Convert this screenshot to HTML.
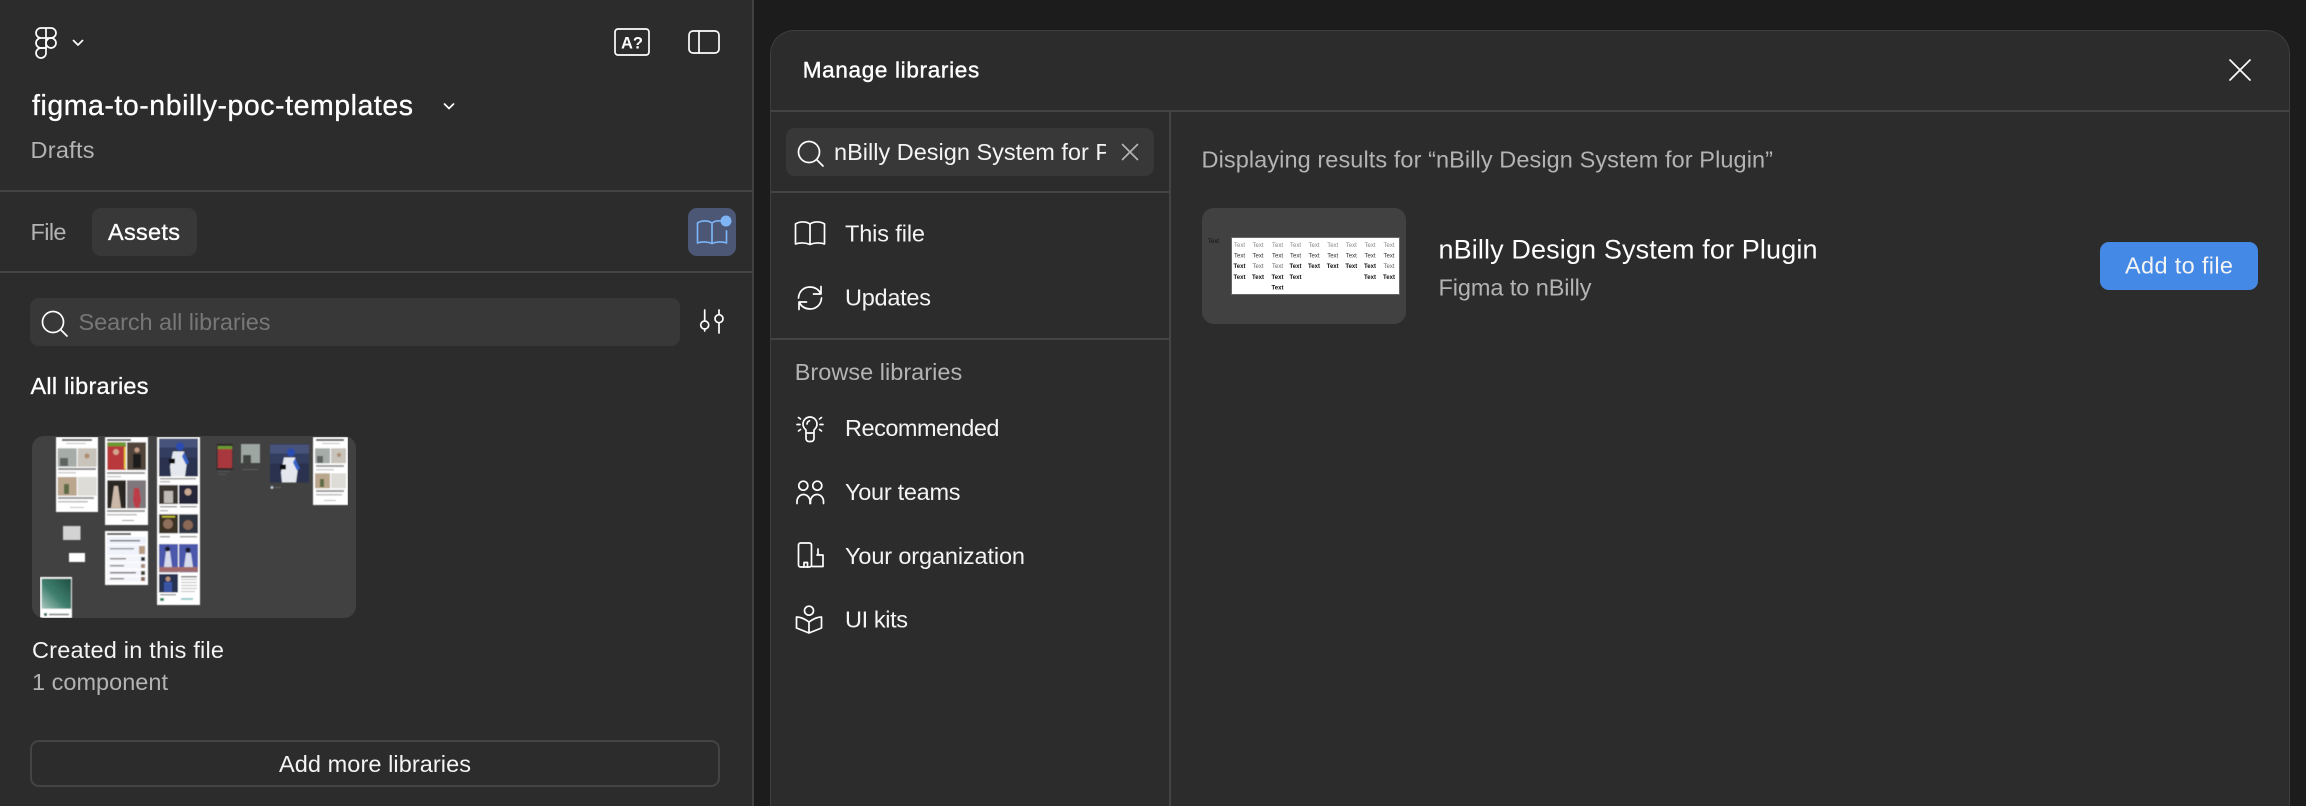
<!DOCTYPE html>
<html lang="en"><head><meta charset="utf-8"><title>Manage libraries</title>
<style>
html,body{margin:0;padding:0;width:2306px;height:806px;overflow:hidden;background:#1c1c1c}
body{position:relative;font-family:"Liberation Sans",sans-serif}
.a{position:absolute;box-sizing:border-box}
svg{position:absolute;left:0;top:0}
text{font-family:"Liberation Sans",sans-serif}
.t{fill:#f4f4f4;font-size:23.500px}
.m{fill:#fff;stroke:#fff;stroke-width:.3px;font-size:23.500px}
.s{fill:#b3b3b3;font-size:23.500px}
.ic{fill:none;stroke:#fff;stroke-width:1.700;stroke-linecap:round;stroke-linejoin:round}
</style></head><body>
<div class="a" style="left:0;top:0;width:754px;height:806px;background:#2c2c2c;border-right:2px solid #414141"></div>
<div class="a" style="left:0;top:190px;width:752px;height:2px;background:#444"></div>
<div class="a" style="left:0;top:271px;width:752px;height:2px;background:#444"></div>
<div class="a" style="left:92px;top:208px;width:105px;height:48px;border-radius:9px;background:#383838"></div>
<div class="a" style="left:688px;top:208px;width:48px;height:48px;border-radius:9px;background:#4c5675"></div>
<div class="a" style="left:30px;top:298px;width:650px;height:48px;border-radius:9px;background:#383838"></div>
<div class="a" style="left:30px;top:740px;width:690px;height:47px;border-radius:9px;border:2px solid #444"></div>
<div class="a" style="left:770px;top:30px;width:1520px;height:776px;border-radius:24px 24px 0 0;background:#2c2c2c;border:1.500px solid #3e3e3e;border-bottom:0"></div>
<div class="a" style="left:771px;top:110px;width:1518px;height:2px;background:#444"></div>
<div class="a" style="left:1169px;top:112px;width:2px;height:694px;background:#444"></div>
<div class="a" style="left:771px;top:191px;width:398px;height:2px;background:#444"></div>
<div class="a" style="left:771px;top:338px;width:398px;height:2px;background:#444"></div>
<div class="a" style="left:786px;top:128px;width:368px;height:48px;border-radius:9px;background:#383838"></div>
<div class="a" style="left:1202px;top:208px;width:204px;height:116px;border-radius:12px;background:#414141"></div>
<div class="a" style="left:1231px;top:237px;width:169px;height:58px;background:#fff;border:1px solid #666"></div>
<div class="a" style="left:2100px;top:242px;width:158px;height:48px;border-radius:9px;background:#4589e6"></div>
<div class="a" style="left:32px;top:436px;width:324px;height:182px;border-radius:12px;background:#414141"></div>

<svg width="2306" height="806" viewBox="0 0 2306 806" xmlns="http://www.w3.org/2000/svg">
<defs>
<clipPath id="th"><rect x="32" y="436" width="324" height="182" rx="12"/></clipPath>
<clipPath id="q"><rect x="830" y="130" width="276" height="44"/></clipPath>
<linearGradient id="gr" x1="1" y1="0" x2="0" y2="1"><stop offset="0" stop-color="#1f4f42"/><stop offset=".55" stop-color="#3f7f6e"/><stop offset="1" stop-color="#a9c8bf"/></linearGradient>
<filter id="bl" x="0" y="0" width="100%" height="100%"><feGaussianBlur stdDeviation=".6"/></filter>
<g id="book"><path class="ic" d="M795.500 244V224c3.500-2.500 10.500-3 14.500 0V243M810 224c4-3 11-2.500 14.500 0V244M795.500 244c4-1.500 10-1.500 14.500.5c4.500-2 10.500-2 14.500-.5"/></g>
<g id="search"><circle class="ic" cx="809" cy="152" r="10.500"/><path class="ic" d="M817 160L823 166"/></g>
<g id="player"><rect width="39" height="38" fill="#2a3350"/><rect y="0" width="39" height="9" fill="#46527a"/><rect y="9" width="39" height="10" fill="#323c5e"/><path d="M14 13h11l3 10-2 15H12l-1-10z" fill="#e4e8ee"/><circle cx="21" cy="8" r="4" fill="#2c4cb0"/><path d="M25 14l5 10-3 2-4-8z" fill="#3763c9"/><rect x="10" y="20" width="6" height="5" fill="#111"/></g>
</defs>

<!-- Thumbnail: created in this file -->
<g clip-path="url(#th)"><g filter="url(#bl)">
<rect x="56" y="437" width="42" height="75" fill="#fff"/>
<rect x="105" y="437" width="43" height="88" fill="#fff"/>
<rect x="105" y="531" width="43" height="54" fill="#fff"/>
<rect x="157" y="437" width="43" height="168" fill="#fff"/>
<rect x="313" y="437" width="35" height="68" fill="#fff"/>
<rect x="63" y="526" width="17.500" height="14" fill="#d3d3d3"/>
<rect x="69" y="553" width="16" height="9" fill="#fff"/>
<rect x="40" y="577" width="32" height="41" fill="#fff"/>
<rect x="41.700" y="578.700" width="29.500" height="30" fill="url(#gr)"/>
<rect x="44" y="613" width="3" height="3" fill="#2d6b57"/><rect x="49" y="613.500" width="20" height="2" fill="#999"/>
<rect x="62" y="439" width="30" height="2" fill="#555"/>
<rect x="66" y="443" width="20" height="1" fill="#bbb"/>
<rect x="57.700" y="448.300" width="19" height="18.500" fill="#a6aca7"/><rect x="60" y="458" width="8" height="8" fill="#5e6462"/>
<rect x="77.700" y="448.300" width="19" height="18.500" fill="#c8c3bb"/><circle cx="87" cy="456" r="2.500" fill="#b18d6f"/>
<rect x="58" y="468" width="38" height="2" fill="#888"/><rect x="58" y="472" width="18" height="1.500" fill="#ccc"/>
<rect x="57.700" y="477" width="19" height="18.700" fill="#b9a68c"/><rect x="64" y="484" width="5" height="10" fill="#5c6b45"/>
<rect x="77.700" y="477" width="19" height="18.700" fill="#dedcd6"/>
<rect x="58" y="497" width="36" height="2" fill="#999"/><rect x="58" y="501" width="30" height="1.500" fill="#bbb"/><rect x="70" y="507" width="14" height="1" fill="#bbb"/>
<rect x="107" y="439" width="24" height="2" fill="#555"/>
<rect x="107.300" y="442.300" width="18.700" height="27.700" fill="#b9383a"/><rect x="107.300" y="442.300" width="18.700" height="4" fill="#6b9a30"/><rect x="124" y="447" width="2" height="22" fill="#e4c43a"/><circle cx="116" cy="452" r="3" fill="#d3a78f"/>
<rect x="127" y="442.300" width="19" height="27.700" fill="#51443b"/><rect x="133" y="454" width="8" height="14" fill="#1e1e1e"/><circle cx="137" cy="450" r="2.500" fill="#c49a84"/>
<rect x="107" y="472" width="38" height="2" fill="#999"/><rect x="107" y="476" width="14" height="1.500" fill="#ccc"/>
<rect x="107.300" y="480.300" width="18.700" height="28" fill="#2a2523"/><path d="M114 486h4l3 22h-10z" fill="#cbb8a8"/>
<rect x="127" y="480.300" width="19" height="28" fill="#7e777b"/><path d="M134 488h5l2 12-2 8h-4l-2-8z" fill="#bb3c47"/>
<rect x="107" y="510" width="38" height="2" fill="#999"/><rect x="107" y="514" width="30" height="1.500" fill="#bbb"/><rect x="122" y="520" width="12" height="1" fill="#999"/>
<rect x="107" y="533" width="24" height="2" fill="#555"/>
<rect x="107" y="537" width="39" height="7" fill="#eef2fb"/><rect x="110" y="540" width="30" height="1.500" fill="#777"/>
<rect x="107" y="545" width="39" height="10" fill="#f0f3fb"/><rect x="110" y="548" width="24" height="1.500" fill="#999"/><rect x="139" y="546" width="6" height="8" fill="#b79c84"/>
<rect x="107" y="556" width="39" height="6" fill="#f4f5fa"/><rect x="110" y="558" width="16" height="1.500" fill="#888"/><rect x="141" y="557" width="4" height="4" fill="#333"/>
<rect x="107" y="563" width="39" height="5.500" fill="#f4f5fa"/><rect x="110" y="565" width="14" height="1.500" fill="#888"/><rect x="141" y="564" width="4" height="4" fill="#a98d78"/>
<rect x="107" y="570" width="39" height="5.500" fill="#f4f5fa"/><rect x="110" y="572" width="26" height="1.500" fill="#777"/><rect x="141" y="571" width="4" height="4" fill="#443"/>
<rect x="107" y="576.500" width="39" height="5" fill="#f4f5fa"/><rect x="110" y="578" width="14" height="1.500" fill="#888"/><rect x="141" y="577" width="4" height="4" fill="#865"/>
<use href="#player" transform="translate(159 438.500)"/>
<rect x="160" y="478" width="36" height="1.500" fill="#999"/><rect x="160" y="481" width="10" height="1.500" fill="#bbb"/>
<rect x="159" y="485" width="19" height="19" fill="#3b3432"/><rect x="164" y="491" width="9" height="12" fill="#bdb9b5"/>
<rect x="179" y="485" width="19" height="19" fill="#26283a"/><circle cx="188" cy="492" r="3.500" fill="#c9a793"/>
<rect x="160" y="506" width="17" height="1.500" fill="#999"/><rect x="180" y="506" width="17" height="1.500" fill="#999"/><rect x="160" y="510" width="8" height="1.500" fill="#bbb"/>
<rect x="159" y="514.300" width="19" height="19" fill="#3a3128"/><circle cx="168" cy="524" r="5" fill="#8d6f5a"/><rect x="162" y="516" width="13" height="1.500" fill="#c7c32e"/>
<rect x="179" y="514.300" width="19" height="19" fill="#2e3540"/><circle cx="188" cy="525" r="5" fill="#8a6855"/>
<rect x="160" y="536" width="10" height="1.500" fill="#999"/><rect x="180" y="536" width="17" height="1.500" fill="#999"/>
<rect x="159" y="544" width="19" height="28.300" fill="#4b58ab"/><path d="M166 551h4l2 16h-8z" fill="#d6daec"/><circle cx="167.500" cy="549" r="2.500" fill="#1f1d28"/>
<rect x="179" y="544" width="19" height="28.300" fill="#4b58ab"/><path d="M186 553h5l2 14h-9z" fill="#d6daec"/><circle cx="188" cy="550" r="2.500" fill="#1f1d28"/>
<rect x="159" y="567" width="39" height="5" fill="#a06a6a"/>
<rect x="159" y="574" width="19" height="18.500" fill="#28304f"/><rect x="164" y="582" width="8" height="10" fill="#3a55a6"/><circle cx="168" cy="579" r="2.500" fill="#b89078"/>
<rect x="160" y="594" width="16" height="1.500" fill="#999"/><rect x="160" y="598" width="4" height="3" fill="#2d8a5d"/>
<rect x="181" y="576" width="16" height="1.500" fill="#777"/><rect x="181" y="579" width="16" height="1" fill="#bbb"/><rect x="181" y="582" width="16" height="1" fill="#bbb"/><rect x="181" y="585" width="16" height="1" fill="#bbb"/><rect x="181" y="588" width="16" height="1" fill="#bbb"/><rect x="181" y="591" width="14" height="1" fill="#bbb"/><rect x="181" y="598" width="12" height="2" fill="#9cc"/>
<rect x="216.700" y="444" width="16" height="26" fill="#2f2c2b"/><rect x="217.700" y="446" width="14.500" height="22" fill="#a8383c"/><rect x="217.700" y="446" width="14.500" height="3" fill="#6b9a30"/><rect x="218" y="471" width="12" height="1" fill="#555"/><rect x="218" y="474" width="8" height="1" fill="#555"/>
<rect x="241" y="444" width="19" height="19" fill="#9ea6a2"/><rect x="243" y="455" width="8" height="8" fill="#3f4543"/><rect x="242" y="469" width="16" height="1" fill="#5c5c5c"/>
<rect x="270" y="444" width="39" height="38.500" fill="#2a3350"/><use href="#player" transform="translate(270 444.500)"/><circle cx="272" cy="487.500" r="1.500" fill="#bcd"/><rect x="275" y="487" width="6" height="1" fill="#666"/>
<rect x="316" y="439" width="28" height="2" fill="#555"/><rect x="322" y="443" width="18" height="1" fill="#bbb"/>
<rect x="315" y="448.300" width="15" height="15" fill="#a6aca7"/><rect x="317" y="456" width="6" height="7" fill="#5e6462"/>
<rect x="331" y="448.300" width="15" height="15" fill="#c8c3bb"/><circle cx="339" cy="455" r="2" fill="#b18d6f"/>
<rect x="316" y="465" width="28" height="2" fill="#999"/><rect x="316" y="469" width="18" height="1.500" fill="#ccc"/>
<rect x="315" y="473.300" width="15" height="15" fill="#b9a68c"/><rect x="320" y="479" width="4" height="8" fill="#5c6b45"/>
<rect x="331" y="473.300" width="15" height="15" fill="#dedcd6"/>
<rect x="316" y="490" width="28" height="2" fill="#999"/><rect x="316" y="494" width="26" height="1.500" fill="#bbb"/><rect x="324" y="500" width="12" height="1" fill="#bbb"/>
</g></g>

<!-- Library thumbnail text -->
<g text-anchor="middle" font-size="6">
<text x="1213.500" y="243" fill="#111">Text</text>
<g fill="#888"><text x="1239.500" y="247">Text</text><text x="1258" y="247">Text</text><text x="1277.500" y="247">Text</text><text x="1295.500" y="247">Text</text><text x="1314" y="247">Text</text><text x="1332.700" y="247">Text</text><text x="1351.300" y="247">Text</text><text x="1370" y="247">Text</text><text x="1389" y="247">Text</text></g>
<g fill="#333"><text x="1239.500" y="257.500">Text</text><text x="1258" y="257.500">Text</text><text x="1277.500" y="257.500">Text</text><text x="1295.500" y="257.500">Text</text><text x="1314" y="257.500">Text</text><text x="1332.700" y="257.500">Text</text><text x="1351.300" y="257.500">Text</text><text x="1370" y="257.500">Text</text><text x="1389" y="257.500">Text</text></g>
<g fill="#111" font-weight="bold"><text x="1239.500" y="268">Text</text><text x="1314" y="268">Text</text><text x="1332.700" y="268">Text</text><text x="1351.300" y="268">Text</text><text x="1370" y="268">Text</text><text x="1295.500" y="268">Text</text>
<text x="1239.500" y="279">Text</text><text x="1258" y="279">Text</text><text x="1277.500" y="279">Text</text><text x="1295.500" y="279">Text</text><text x="1370" y="279">Text</text><text x="1389" y="279">Text</text><text x="1277.500" y="289.500">Text</text></g>
<g fill="#666"><text x="1258" y="268">Text</text><text x="1277.500" y="268">Text</text><text x="1389" y="268">Text</text></g>
</g>

<!-- Left panel text -->
<text class="m" style="font-size:28.500px" x="32" y="115" textLength="381">figma-to-nbilly-poc-templates</text>
<text class="s" x="30.500" y="158" textLength="64">Drafts</text>
<text class="s" x="30.500" y="240" textLength="36">File</text>
<text class="m" x="108" y="240" textLength="72">Assets</text>
<text x="78.500" y="330" style="font-size:23.500px" fill="#777" textLength="192">Search all libraries</text>
<text class="m" x="30.500" y="394" textLength="118">All libraries</text>
<text class="t" x="32" y="658" textLength="192">Created in this file</text>
<text class="s" x="32" y="690" textLength="136">1 component</text>
<text class="t" x="279" y="772" textLength="192">Add more libraries</text>

<!-- Left panel icons -->
<path class="ic" d="M46 28H41a5 5 0 0 0 0 10h5zM46 28h5a5 5 0 0 1 0 10h-5zM46 38h-5a5 5 0 0 0 0 10h5z"/><circle class="ic" cx="51" cy="43" r="5"/><path class="ic" d="M41 48h5v4.500a5 5 0 1 1-5-4.500z"/>
<path class="ic" d="M73.500 40.500L78 45L82.500 40.500M444.500 104L449 108.500L453.500 104"/>
<rect class="ic" x="615" y="29" width="34" height="26" rx="3"/>
<text x="632" y="48.500" text-anchor="middle" font-weight="bold" fill="#fff" style="font-size:16.500px">A?</text>
<rect class="ic" x="689" y="31" width="30" height="22" rx="4"/><path class="ic" d="M699 31V53"/>
<g transform="translate(-98 -1)"><path fill="none" stroke="#7cb4f5" stroke-width="1.700" stroke-linecap="round" stroke-linejoin="round" d="M795.500 244V224c3.500-2.500 10.500-3 14.500 0V243M810 224c4-3 9-2.500 12-1M824.500 232V244M795.500 244c4-1.500 10-1.500 14.500.5c4.500-2 10.500-2 14.500-.5"/></g>
<circle cx="726" cy="221" r="5.500" fill="#7fb5f5"/>
<use href="#search" transform="translate(-756 170)"/>
<path class="ic" d="M704.700 310V320.500M704.700 329V331M719 310V314.500M719 323V333"/>
<circle class="ic" cx="704.700" cy="325" r="4"/><circle class="ic" cx="719" cy="318.700" r="4"/>

<!-- Modal text -->
<text class="m" style="stroke-width:.4px;font-size:22.500px" x="802.700" y="77.700" textLength="176.500">Manage libraries</text>
<g clip-path="url(#q)"><text class="t" x="834" y="160" textLength="277">nBilly Design System for P</text></g>
<text class="t" x="845" y="241.700" textLength="80">This file</text>
<text class="t" x="845" y="305.700" textLength="86">Updates</text>
<text class="s" x="794.700" y="380" textLength="167.500">Browse libraries</text>
<text class="t" x="845" y="436" textLength="154.500">Recommended</text>
<text class="t" x="845" y="500" textLength="115.500">Your teams</text>
<text class="t" x="845" y="564" textLength="180">Your organization</text>
<text class="t" x="845" y="627.700" textLength="63">UI kits</text>
<text class="s" x="1201.500" y="167.700" textLength="571.500">Displaying results for “nBilly Design System for Plugin”</text>
<text x="1438.500" y="258.500" fill="#fff" style="font-size:27px" textLength="379">nBilly Design System for Plugin</text>
<text class="s" x="1438.500" y="295.700" textLength="153">Figma to nBilly</text>
<text class="t" x="2125" y="273.300" fill="#fff" textLength="108">Add to file</text>

<!-- Modal icons -->
<path class="ic" d="M2230 60L2250 80M2250 60L2230 80"/>
<use href="#search"/>
<path fill="none" stroke="#b3b3b3" stroke-width="1.700" stroke-linecap="round" d="M1122.500 144.500L1137.500 159.500M1137.500 144.500L1122.500 159.500"/>
<use href="#book"/>
<path class="ic" d="M798.500 298C799 291 804 287 810 287C814 287 818 289 820.500 293M821 286.500V294H813.500M821.500 298C821 305 816 309 810 309C806 309 802 307 799.500 303M799 309.500V302H806.500"/>
<path class="ic" d="M806 433V430c-1.700-1.500-3-3.500-3-6a7 7 0 0 1 14 0c0 2.500-1.300 4.500-3 6V433zM806 433h8v5.500a3 3 0 0 1-3 3h-2a3 3 0 0 1-3-3zM807 424c.2-1.500 1-2.700 2.500-3.200M798.500 417.500L800.500 419M797 424.500H800M798.500 431L800.500 429.500M821.500 417.500L819.500 419M823 424.500H820M821.500 431L819.500 429.500"/>
<circle class="ic" cx="803.300" cy="485.700" r="4.500"/><circle class="ic" cx="817.300" cy="485.700" r="4.500"/>
<path class="ic" d="M797 503.500v-2c0-4 3-7 6.500-7s6.500 3 6.500 7v2M823.500 503.500v-2c0-4-3-7-6.500-7s-6.500 3-6.500 7v2"/>
<rect class="ic" x="798.500" y="543" width="13" height="24" rx="2"/><path class="ic" d="M804 567V562.500H807.500V567M812 566.500H823V555H817M818 555V549"/>
<circle class="ic" cx="809" cy="610.700" r="4.500"/>
<path class="ic" d="M809 622C805 619 800 617 796.500 617V628L809 633L821.500 628V617C818 617 813 619 809 622V633"/>
</svg>
</body></html>
